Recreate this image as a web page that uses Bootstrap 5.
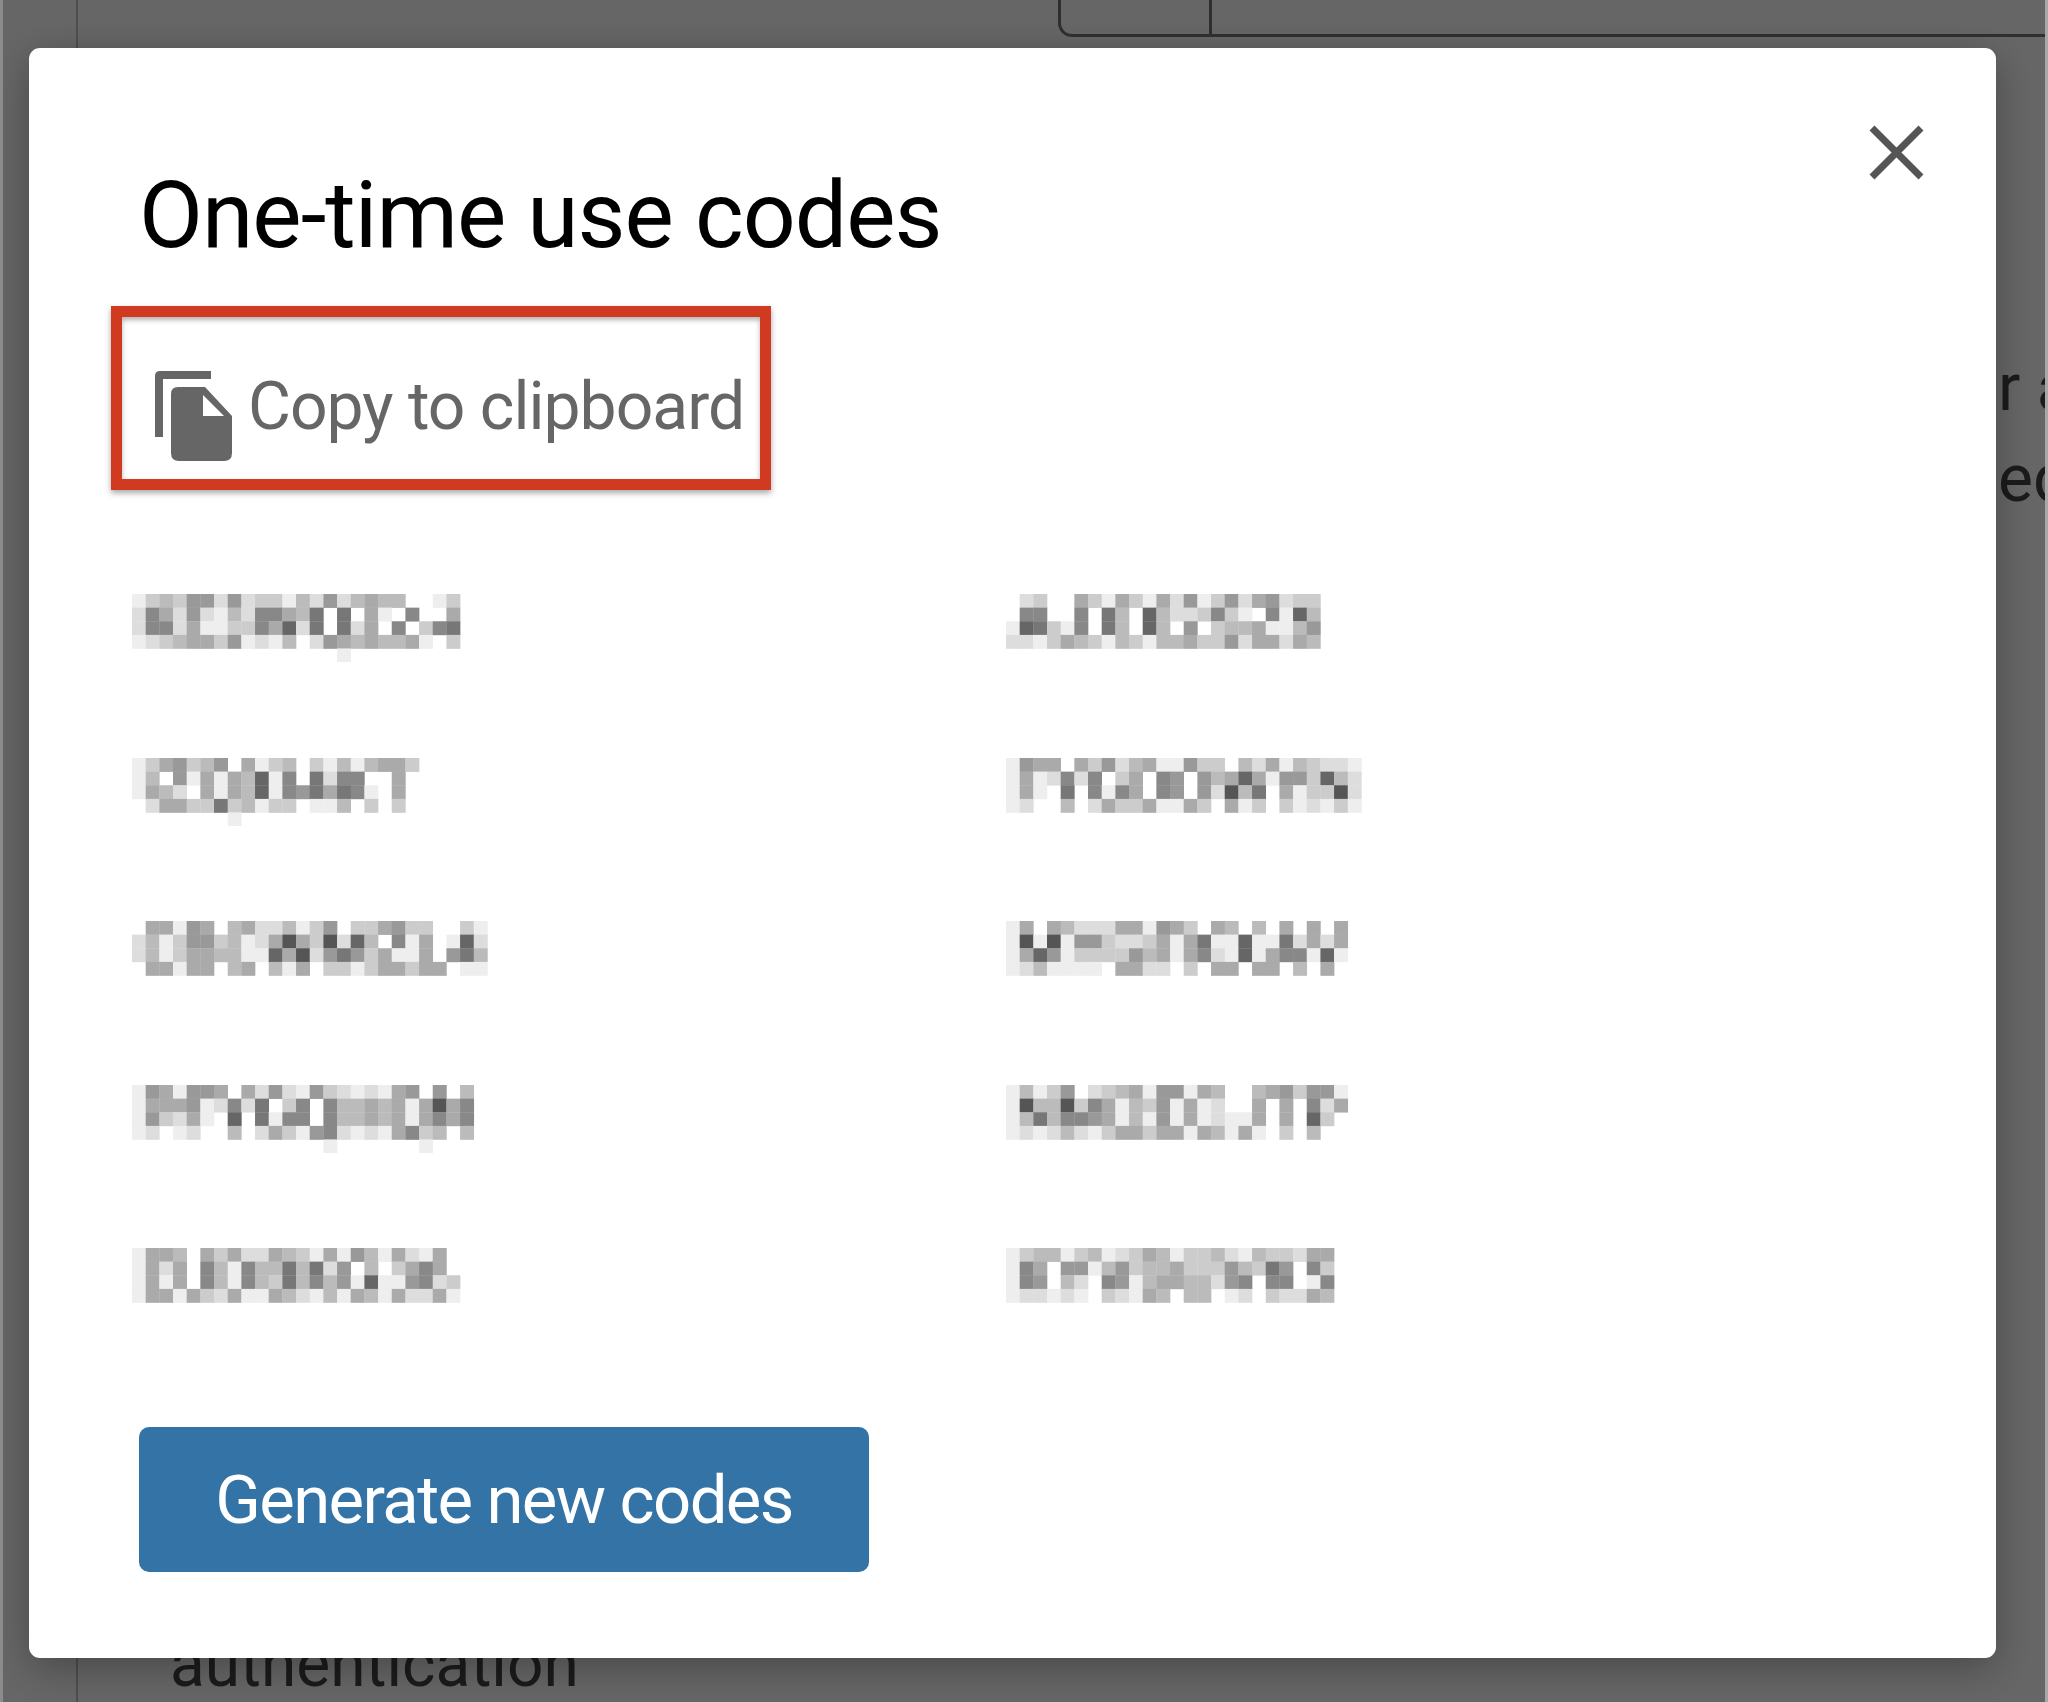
<!DOCTYPE html>
<html lang="en">
<head>
<meta charset="utf-8">
<title>One-time use codes</title>
<link href="https://cdn.jsdelivr.net/npm/bootstrap@5.3.0/dist/css/bootstrap.min.css" rel="stylesheet">
<style>
html,body{height:100%;overflow:hidden;font-family:Roboto,"Liberation Sans",sans-serif;background:#fff}
.under-page{height:1702px;width:2048px;display:flex;padding-left:3px;padding-right:2px}
.under-side{width:75px;flex:none;border-right:2px solid #c4c4c4}
.under-main{flex:1;min-width:0;display:flex;flex-direction:column;overflow:hidden;color:#444}
.under-tabs{height:37px;flex:none;margin-left:980px;width:1100px;display:flex;border:3px solid #777;border-top:0;border-bottom-left-radius:14px}
.under-tab{width:151px;border-right:3px solid #777}
.under-frag{margin-left:1920px;white-space:nowrap;line-height:91px;margin-top:305px;font-size:66px}
.under-foot{margin-top:auto;margin-left:92px;line-height:72px;font-size:64px;white-space:nowrap;padding-bottom:1px}
.shade{--bs-backdrop-opacity:.6}
.otp-modal{border-left:3px solid #8c8c8c;border-right:3px solid #a8a8a8}
.otp-dialog{max-width:none;width:1967px;margin:48px 0 0 26px}
.otp-content{height:1610px;border:0;border-radius:11px;box-shadow:0 10px 40px rgba(0,0,0,.3);padding:0;display:block}
.otp-title{font-size:93px;font-weight:400;line-height:1;letter-spacing:-1px;color:#000;margin:0;padding:121px 0 0 110px;height:325px}
.otp-close{line-height:0;background:none;border:0;padding:0;position:absolute;top:77px;right:72px}
.copy-wrap{position:relative;display:inline-flex;align-items:flex-start;margin-left:125px;color:#666;font-size:66px;line-height:1;letter-spacing:-1px;height:91px}
.copy-wrap svg{flex:none;margin-right:16px;margin-top:-2px}
.copy-wrap span{margin-top:1px}
.annot{position:absolute;left:-43px;top:-67px;width:660px;height:184px;border:11px solid #cf3a20;box-shadow:0 3px 6px rgba(0,0,0,.35),inset 0 3px 5px rgba(0,0,0,.3);pointer-events:none}
.code-grid{display:grid;grid-template-columns:874px 1fr;grid-auto-rows:163.6px;margin:125px 0 0 103px}
.mosaic{display:block;filter:blur(.6px)}
.gen-wrap{margin-top:15px}
.otp-generate{display:inline-block;margin:0 0 0 110px;width:730px;height:145px;background:#3373a6;border:0;border-radius:10px;color:#fff;font-size:67px;font-weight:400;letter-spacing:-1.6px;line-height:1;padding:3px 0 0}
.otp-generate:hover{background:#3373a6;color:#fff}
</style>
</head>
<body>
<div class="under-page">
  <div class="under-side"></div>
  <div class="under-main">
    <div class="under-tabs"><div class="under-tab"></div></div>
    <div class="under-frag">r a<br>ed</div>
    <div class="under-foot">authentication</div>
  </div>
</div>
<div class="modal-backdrop show shade"></div>
<div class="modal d-block otp-modal" tabindex="-1">
  <div class="modal-dialog otp-dialog">
    <div class="modal-content otp-content">
      <h2 class="modal-title otp-title">One-time use codes</h2>
      <button type="button" class="otp-close" aria-label="Close">
        <svg width="55" height="55" viewBox="0 0 55 55"><path d="M3 3 L52 52 M52 3 L3 52" stroke="#555" stroke-width="7" fill="none"/></svg>
      </button>
      <div class="copy-wrap">
        <svg width="78" height="91" viewBox="0 0 78 91" fill="#666"><path d="M6 0H57V8H9V66H1V5Q1 0 6 0Z"/><path d="M24 16H51L78 45V82Q78 90 70 90H25Q17 90 17 82V23Q17 16 24 16Z"/><path d="M49 24V45H70Z" fill="#fff"/></svg>
        <span>Copy to clipboard</span>
        <div class="annot"></div>
      </div>
      <div class="code-grid" id="codes"></div>
      <div class="gen-wrap"><button type="button" class="btn otp-generate">Generate new codes</button></div>
    </div>
  </div>
</div>
<script>
/* the blurred codes: each code is a list of pixel rows, one hex grey digit per block */
var codes=[
["ecbc99d9dccebd9dbabbffec","d8ad9debd88ab7f7faef8ffa","d88daeecc8a6d7f7daf8fc87","edcbaac9edebfd9ababbaefc","fffffffffffffffeffffffff"],
["fdcffaceacead9ec9da9dccf","f88ff8f7bf6bddc8cef8e6bf","e67ce8f7bf6bf9fcbbaeeb9f","ddecabcebcebbacc9daadabf"],
["eca9cb9faecbfcebebaacfff","ebf9eaeab6e8f7d88ffa","eabdfaeab6e897a78efa","fdaacc7cbeccfeebfcfc","fffffffe"],
["e9aafac9dbaee9ccfbdaebcdde","eaed8d8fcaf89f9ba6ae99c6bd","eaef7f8e8af89f9d5b7faecc5d","edffbfdaccaeeacfaecfcedece"],
["faae9afbaddbec9fcca9ccffce","dbec99cbeda5ac5d6bf8eafe6d","dbecaabbee6a5d979caeeaf97b","faaeaafbafbeafccecaacaafee"],
["eafabdddaae9acfabfbfafafa","e5e5e99cddcaea7ee6ee7dada","ea69ecccc9baea8de6ea88e6e","edbeeeefaaddfcfaafaafbfaf"],
["e9ae99afad9de9cdedea9f9fb","eaaa9ed8d7fc8f8bbabaea5a8","e9cdaef6f7e88f8bbabaea8a8","edfedffbfdace98dedea8cbfb","ffffffffffffffeffffffe"],
["ebec9fdcbae99eabffba9c99e","e5bb5c8aebc9eaedffafaf8da","eb7b889aebe9eaedeeafaf6cf","ededbdecaacaaeabeaefcfbff"],
["eaabfacaddabceae9beadeaf","eadaf8be8bb7b7d9fbfca8af","eaeaf8be8bc7b8b9e6ee98dc","eaaeacdaeeabdebeabeaddae"],
["ecbbecbedcabeccbdebccdaa","e8af99eb9cbbaccc9bc79f8c","e89fbdf89ebaabbd98f88fe8","eddedefcdeabfbbfedfcddab"]
];
var grid=document.getElementById('codes');
var cw=13.67,ch=13.63,NS='http://www.w3.org/2000/svg';
codes.forEach(function(rows){
  var cell=document.createElement('div');
  var svg=document.createElementNS(NS,'svg');
  svg.setAttribute('class','mosaic');
  svg.setAttribute('width',28*cw);svg.setAttribute('height',5*ch);
  rows.forEach(function(r,y){
    for(var x=0;x<r.length;x++){
      if(r[x]==='f')continue;
      var g=parseInt(r[x],16)*17;
      var rect=document.createElementNS(NS,'rect');
      rect.setAttribute('x',x*cw);rect.setAttribute('y',y*ch);
      rect.setAttribute('width',cw+.3);rect.setAttribute('height',ch+.3);
      rect.setAttribute('fill','rgb('+g+','+g+','+g+')');
      svg.appendChild(rect);
    }
  });
  cell.appendChild(svg);grid.appendChild(cell);
});
</script>
<script src="https://cdn.jsdelivr.net/npm/bootstrap@5.3.0/dist/js/bootstrap.bundle.min.js"></script>
</body>
</html>
